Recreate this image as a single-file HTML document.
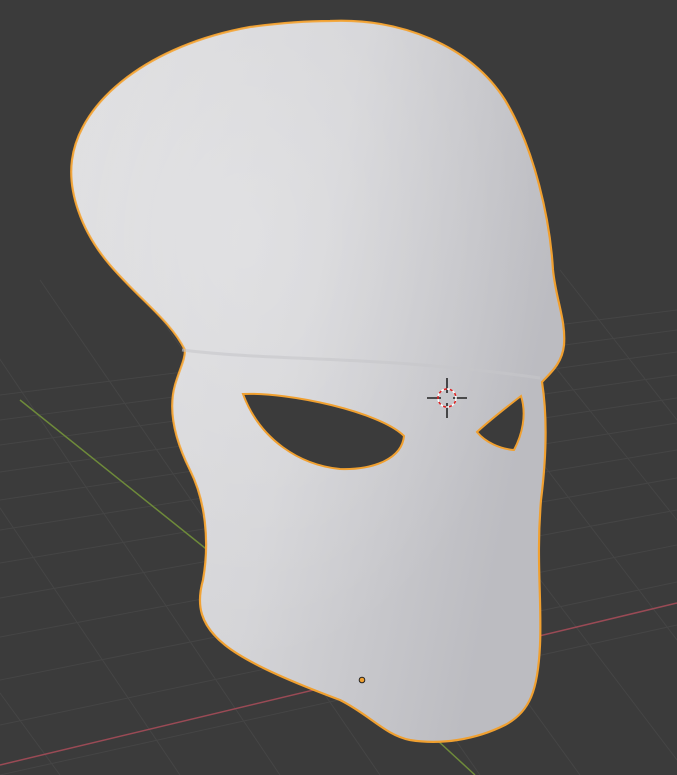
<!DOCTYPE html>
<html><head><style>html,body{margin:0;padding:0;background:#3b3b3b;overflow:hidden}svg{display:block}</style></head>
<body>
<svg width="677" height="775" viewBox="0 0 677 775" xmlns="http://www.w3.org/2000/svg">
<defs>
<linearGradient id="g" x1="0" y1="0" x2="1" y2="0.3">
<stop offset="0" stop-color="#dddddf"/>
<stop offset="0.55" stop-color="#d4d4d7"/>
<stop offset="1" stop-color="#bcbcc1"/>
</linearGradient>
<radialGradient id="s" cx="0.35" cy="0.3" r="0.6">
<stop offset="0" stop-color="#fff" stop-opacity="0.25"/>
<stop offset="1" stop-color="#fff" stop-opacity="0"/>
</radialGradient>
</defs>
<rect width="677" height="775" fill="#3b3b3b"/>
<g stroke="#454545" stroke-width="1">
<path d="M0 395 L677 310 M0 420 L677 330 M0 445 L677 352 M0 472 L677 375 M0 500 L677 398 M0 530 L677 423 M0 563 L677 450 M0 598 L677 478 M0 637 L677 510 M0 680 L677 545 M0 725 L677 582 M0 775 L677 625"/>
<path d="M-120 330 L180 775 M-40 300 L280 775 M40 280 L380 775 M120 260 L480 775 M200 250 L580 775 M290 250 L677 760 M380 250 L677 640 M470 260 L677 520 M560 270 L677 420 M-200 420 L60 775 M-280 500 L-40 775"/>
</g>
<path d="M0 765 L677 603" stroke="#9a4a55" stroke-width="1.5"/>
<path d="M20 400 L220 560 M437 740 L475 775" stroke="#6e8a3a" stroke-width="1.5"/>
<path d="M330 21 C400 18 470 45 505 100 C535 150 550 220 553 270 C556 300 566 320 564 345 C562 365 548 375 542 382 C548 420 546 460 541 500 C536 560 542 600 540 645 C538 690 530 712 505 725 C475 740 440 745 410 740 C385 735 370 715 340 700 C300 685 250 665 225 645 C200 625 196 605 203 580 C210 540 205 500 190 470 C175 440 168 410 175 385 C180 368 185 360 185 350 C170 320 140 300 110 265 C80 230 68 190 72 160 C80 100 150 45 250 27 C280 23 305 21 330 21 Z" fill="url(#g)" stroke="#f0a030" stroke-width="2.2"/>
<path d="M330 21 C400 18 470 45 505 100 C535 150 550 220 553 270 C556 300 566 320 564 345 C562 365 548 375 542 382 C548 420 546 460 541 500 C536 560 542 600 540 645 C538 690 530 712 505 725 C475 740 440 745 410 740 C385 735 370 715 340 700 C300 685 250 665 225 645 C200 625 196 605 203 580 C210 540 205 500 190 470 C175 440 168 410 175 385 C180 368 185 360 185 350 C170 320 140 300 110 265 C80 230 68 190 72 160 C80 100 150 45 250 27 C280 23 305 21 330 21 Z" fill="url(#s)"/>
<path d="M243 394 C290 392 380 412 404 436 C402 458 375 470 340 469 C300 465 260 440 243 394 Z" fill="#3b3b3b" stroke="#f0a030" stroke-width="2"/>
<path d="M521 396 C527 415 522 435 514 450 C500 449 485 442 477 432 C490 420 508 406 521 396 Z" fill="#3b3b3b" stroke="#f0a030" stroke-width="2"/>
<path d="M182 350 C280 362 380 355 540 378" stroke="#c6c6ca" stroke-width="3" fill="none" opacity="0.6"/>
<g stroke="#000" stroke-width="1.3">
<path d="M447 378 V393 M447 403 V418 M427 398 H441 M453 398 H467"/>
</g>
<circle cx="447" cy="398" r="9" fill="none" stroke="#fff" stroke-width="1.5" stroke-dasharray="3 3"/>
<circle cx="447" cy="398" r="9" fill="none" stroke="#e02020" stroke-width="1.5" stroke-dasharray="3 3" stroke-dashoffset="3"/>
<circle cx="362" cy="680" r="2.8" fill="#f0a030" stroke="#222" stroke-width="1"/>
</svg>
</body></html>
